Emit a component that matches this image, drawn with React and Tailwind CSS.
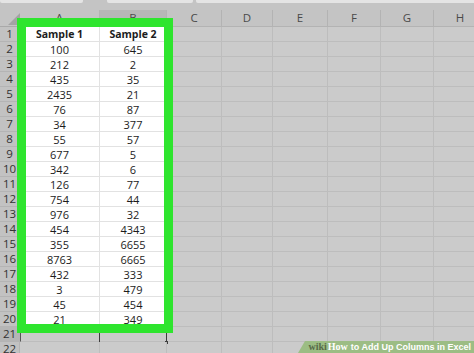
import React from "react";

const data = [
  ["100", "645"], ["212", "2"], ["435", "35"], ["2435", "21"], ["76", "87"],
  ["34", "377"], ["55", "57"], ["677", "5"], ["342", "6"], ["126", "77"],
  ["754", "44"], ["976", "32"], ["454", "4343"], ["355", "6655"], ["8763", "6665"],
  ["432", "333"], ["3", "479"], ["45", "454"], ["21", "349"],
];

const cols = ["A", "B", "C", "D", "E", "F", "G", "H"];

export default function App() {
  const rows = [];
  for (let r = 1; r <= 22; r++) rows.push(r);

  return (
    <div
      className="relative w-[474px] h-[353px] overflow-hidden bg-[#c9c9c9]"
      style={{ fontFamily: '"Open Sans", "Noto Sans", sans-serif' }}
    >
      {/* top toolbar strip */}
      <div className="flex h-[10px] gap-0 bg-[#c4c4c4]">
        <div className="h-[3px] w-[83px] rounded-b-[2px] bg-[#e4e4e4]" />
        <div className="ml-[24px] h-[3px] w-[86px] rounded-b-[2px] bg-[#e4e4e4]" />
        <div className="ml-[3px] h-[3px] flex-1 rounded-bl-[2px] bg-[#e4e4e4]" />
      </div>

      {/* grid */}
      <div className="grid grid-cols-[20px_80px_67px_55px_51px_55px_53px_53px_53px]">
        {/* header row */}
        <div className="relative h-[17px] border-b border-[#a9a9a9] bg-[#c4c4c4]">
          <svg className="absolute left-[8px] top-[3px]" width="12" height="12" viewBox="0 0 12 12">
            <polygon points="12,0 12,12 0,12" fill="#a3a3a3" />
          </svg>
        </div>
        {cols.map((c) => (
          <div
            key={c}
            className={`flex h-[17px] items-center justify-center border-b border-r border-[#b3b3b3] text-[11.5px] leading-none text-[#4a4a4a] ${
              c === "B" ? "bg-[#b7b7b7]" : "bg-[#c4c4c4]"
            }`}
          >
            {c}
          </div>
        ))}

        {rows.map((r) => {
          const inData = r <= 20;
          const vals = r === 1 ? ["Sample 1", "Sample 2"] : inData ? data[r - 2] : null;
          return (
            <React.Fragment key={r}>
              <div
                className={`flex h-[15px] items-center justify-center border-b border-r border-[#b4b4b4] text-[11.5px] leading-none text-[#333] ${
                  r === 21 ? "bg-[#b5b5b5]" : "bg-[#c2c2c2]"
                }`}
              >
                {r}
              </div>
              {[0, 1].map((i) => (
                <div
                  key={i}
                  className={`relative flex h-[15px] items-center justify-center leading-none text-[#1c1c1c] ${
                    inData
                      ? "border-b border-r border-[#e2e2e2] bg-white"
                      : "border-b border-r border-[#bdbdbd] bg-[#cbcbcb]"
                  } ${r === 1 ? "text-[10.5px] font-bold" : "text-[11px] font-medium"} ${
                    r === 21 && i === 0 ? "border-l border-l-[#555]" : ""
                  }`}
                >
                  {vals ? vals[i] : null}
                  {r === 21 && i === 1 && (
                    <div className="absolute -left-px top-0 h-[16px] w-[68px] border border-[#3d3d3d]">
                      <div className="absolute -bottom-[2px] -right-[2px] h-[3px] w-[3px] bg-[#3d3d3d]" />
                    </div>
                  )}
                </div>
              ))}
              {[0, 1, 2, 3, 4, 5].map((i) => (
                <div key={"g" + i} className="h-[15px] border-b border-r border-[#bdbdbd] bg-[#cbcbcb]" />
              ))}
            </React.Fragment>
          );
        })}
      </div>

      {/* green highlight frame */}
      <div className="pointer-events-none absolute left-[17px] top-[18px] h-[315px] w-[156px] border-[9px] border-[#2ee52e]" />

      {/* wikiHow badge */}
      <div className="absolute bottom-0 right-0 flex h-[12px] w-[176px] items-center justify-end bg-[#9cbd84] pr-[3px] [clip-path:polygon(7px_0,100%_0,100%_100%,0_100%)]">
        <span
          className="text-[10px] font-bold leading-none text-[#566a48]"
          style={{ fontFamily: '"Liberation Serif", serif' }}
        >
          wiki
        </span>
        <span
          className="ml-[1px] text-[10px] font-bold leading-none text-white"
          style={{ fontFamily: '"Liberation Serif", serif' }}
        >
          How
        </span>
        <span
          className="ml-[3px] text-[9px] font-semibold leading-none text-white"
          style={{ fontFamily: '"Liberation Sans", Arial, sans-serif' }}
        >
          to Add Up Columns in Excel
        </span>
      </div>
    </div>
  );
}
